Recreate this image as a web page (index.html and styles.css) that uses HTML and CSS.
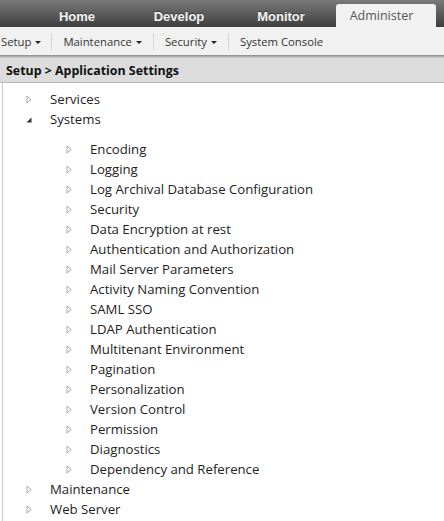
FILE: index.html
```html
<!DOCTYPE html>
<html>
<head>
<meta charset="utf-8">
<link rel="stylesheet" href="styles.css">
</head>
<body>
<div class="topbar">
  <div class="tab">Home</div>
  <div class="tab">Develop</div>
  <div class="tab">Monitor</div>
  <div class="tab active">Administer</div>
</div>
<div class="subnav">
  <div class="item first">Setup<span class="caret"></span></div>
  <div class="sep"></div>
  <div class="item">Maintenance<span class="caret"></span></div>
  <div class="sep"></div>
  <div class="item">Security<span class="caret"></span></div>
  <div class="sep"></div>
  <div class="item">System Console</div>
</div>
<div class="shadow"></div>
<div class="crumb">Setup &gt; Application Settings</div>
<div class="content">
  <ul class="tree">
    <li class="row"><svg class="arr" width="6" height="9" viewBox="0 0 6 9"><polygon points="1,1 5,4.5 1,8" fill="#fff" stroke="#a8a8a8" stroke-width="1"/></svg><span>Services</span></li>
    <li class="row"><svg class="arr" width="6" height="9" viewBox="0 0 6 9"><polygon points="0.5,7.5 5.5,7.5 5.5,2.5" fill="#333"/></svg><span>Systems</span></li>
    <li>
      <ul class="sub">
        <li class="row"><svg class="arr" width="6" height="9" viewBox="0 0 6 9"><polygon points="1,1 5,4.5 1,8" fill="#fff" stroke="#a8a8a8"/></svg><span>Encoding</span></li>
        <li class="row"><svg class="arr" width="6" height="9" viewBox="0 0 6 9"><polygon points="1,1 5,4.5 1,8" fill="#fff" stroke="#a8a8a8"/></svg><span>Logging</span></li>
        <li class="row"><svg class="arr" width="6" height="9" viewBox="0 0 6 9"><polygon points="1,1 5,4.5 1,8" fill="#fff" stroke="#a8a8a8"/></svg><span>Log Archival Database Configuration</span></li>
        <li class="row"><svg class="arr" width="6" height="9" viewBox="0 0 6 9"><polygon points="1,1 5,4.5 1,8" fill="#fff" stroke="#a8a8a8"/></svg><span>Security</span></li>
        <li class="row"><svg class="arr" width="6" height="9" viewBox="0 0 6 9"><polygon points="1,1 5,4.5 1,8" fill="#fff" stroke="#a8a8a8"/></svg><span>Data Encryption at rest</span></li>
        <li class="row"><svg class="arr" width="6" height="9" viewBox="0 0 6 9"><polygon points="1,1 5,4.5 1,8" fill="#fff" stroke="#a8a8a8"/></svg><span>Authentication and Authorization</span></li>
        <li class="row"><svg class="arr" width="6" height="9" viewBox="0 0 6 9"><polygon points="1,1 5,4.5 1,8" fill="#fff" stroke="#a8a8a8"/></svg><span>Mail Server Parameters</span></li>
        <li class="row"><svg class="arr" width="6" height="9" viewBox="0 0 6 9"><polygon points="1,1 5,4.5 1,8" fill="#fff" stroke="#a8a8a8"/></svg><span>Activity Naming Convention</span></li>
        <li class="row"><svg class="arr" width="6" height="9" viewBox="0 0 6 9"><polygon points="1,1 5,4.5 1,8" fill="#fff" stroke="#a8a8a8"/></svg><span>SAML SSO</span></li>
        <li class="row"><svg class="arr" width="6" height="9" viewBox="0 0 6 9"><polygon points="1,1 5,4.5 1,8" fill="#fff" stroke="#a8a8a8"/></svg><span>LDAP Authentication</span></li>
        <li class="row"><svg class="arr" width="6" height="9" viewBox="0 0 6 9"><polygon points="1,1 5,4.5 1,8" fill="#fff" stroke="#a8a8a8"/></svg><span>Multitenant Environment</span></li>
        <li class="row"><svg class="arr" width="6" height="9" viewBox="0 0 6 9"><polygon points="1,1 5,4.5 1,8" fill="#fff" stroke="#a8a8a8"/></svg><span>Pagination</span></li>
        <li class="row"><svg class="arr" width="6" height="9" viewBox="0 0 6 9"><polygon points="1,1 5,4.5 1,8" fill="#fff" stroke="#a8a8a8"/></svg><span>Personalization</span></li>
        <li class="row"><svg class="arr" width="6" height="9" viewBox="0 0 6 9"><polygon points="1,1 5,4.5 1,8" fill="#fff" stroke="#a8a8a8"/></svg><span>Version Control</span></li>
        <li class="row"><svg class="arr" width="6" height="9" viewBox="0 0 6 9"><polygon points="1,1 5,4.5 1,8" fill="#fff" stroke="#a8a8a8"/></svg><span>Permission</span></li>
        <li class="row"><svg class="arr" width="6" height="9" viewBox="0 0 6 9"><polygon points="1,1 5,4.5 1,8" fill="#fff" stroke="#a8a8a8"/></svg><span>Diagnostics</span></li>
        <li class="row"><svg class="arr" width="6" height="9" viewBox="0 0 6 9"><polygon points="1,1 5,4.5 1,8" fill="#fff" stroke="#a8a8a8"/></svg><span>Dependency and Reference</span></li>
      </ul>
    </li>
    <li class="row"><svg class="arr" width="6" height="9" viewBox="0 0 6 9"><polygon points="1,1 5,4.5 1,8" fill="#fff" stroke="#a8a8a8"/></svg><span>Maintenance</span></li>
    <li class="row"><svg class="arr" width="6" height="9" viewBox="0 0 6 9"><polygon points="1,1 5,4.5 1,8" fill="#fff" stroke="#a8a8a8"/></svg><span>Web Server</span></li>
  </ul>
</div>
</body>
</html>
```
FILE: styles.css
```css
html, body {
  margin: 0;
  padding: 0;
  background: #fff;
}
body {
  width: 444px;
  height: 521px;
  overflow: hidden;
  font-family: "Open Sans", "Noto Sans", sans-serif;
}
.topbar {
  height: 27px;
  background: linear-gradient(#7a7a7a, #3e3e3e);
  display: flex;
  align-items: flex-end;
  padding-left: 26px;
}
.tab {
  width: 102px;
  height: 23px;
  line-height: 25px;
  text-align: center;
  color: #f4f4f4;
  font-family: "Liberation Sans", Arial, sans-serif;
  font-weight: bold;
  font-size: 13px;
  text-shadow: 0 -1px 0 rgba(0,0,0,0.4);
}
.tab.active {
  width: 100px;
  margin-left: 4px;
  padding-right: 9px;
  box-sizing: border-box;
  background: #f1f1f1;
  color: #555;
  font-family: "Open Sans", sans-serif;
  font-weight: normal;
  font-size: 12.5px;
  line-height: 24px;
  text-shadow: none;
  border-radius: 3px 3px 0 0;
}
.subnav {
  height: 28px;
  background: #f1f1f1;
  display: flex;
  align-items: center;
  font-size: 11.3px;
  color: #333;
}
.item {
  padding: 0 11px;
  display: flex;
  align-items: center;
  white-space: nowrap;
}
.item.first {
  padding-left: 1px;
  padding-right: 10px;
}
.caret {
  display: inline-block;
  width: 0;
  height: 0;
  margin-left: 4px;
  margin-top: 2px;
  border-left: 3px solid transparent;
  border-right: 3px solid transparent;
  border-top: 3px solid #222;
}
.sep {
  width: 1px;
  height: 17px;
  background: #d6d6d6;
}
.shadow {
  height: 3px;
  background: linear-gradient(#878787, #d4d4d4);
}
.crumb {
  height: 24px;
  line-height: 25px;
  background: #dcdcdc;
  border-bottom: 1px solid #b8b8b8;
  padding-left: 6px;
  font-family: "Open Sans", sans-serif;
  font-weight: bold;
  font-size: 12.4px;
  color: #111;
}
.content {
  margin-left: 2px;
  border-left: 1px solid #c9c9c9;
  padding-top: 6px;
  height: 440px;
}
.tree, .sub {
  list-style: none;
  margin: 0;
  padding: 0;
}
.sub {
  margin-top: 10px;
  padding-left: 40px;
}
.row {
  height: 20px;
  display: flex;
  align-items: center;
  padding-left: 23px;
  font-size: 13.2px;
  color: #1d1d1d;
  white-space: nowrap;
}
.arr {
  flex: none;
  margin-right: 18px;
}
```
